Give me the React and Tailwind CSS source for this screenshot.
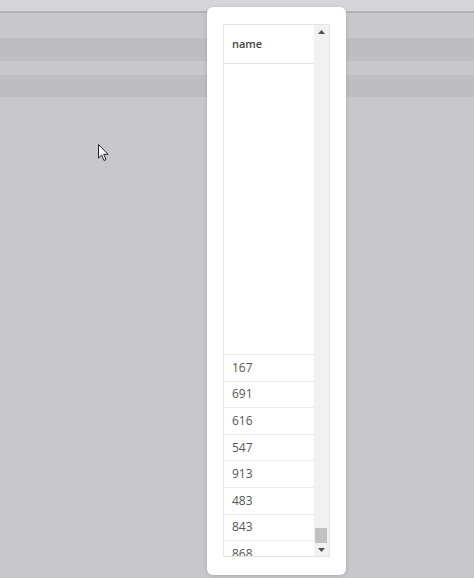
import React from "react";

const rows = ["167", "691", "616", "547", "913", "483", "843", "868"];

const App = () => {
  return (
    <div className="relative h-[578px] w-[474px] overflow-hidden bg-[#c8c7cc] font-['Open_Sans',sans-serif]">
      {/* page behind the overlay */}
      <div className="h-[11px] bg-[#d5d4d9]" />
      <div className="h-[2px] bg-[#b2b1b6]" />
      <div className="h-[25px] bg-[#c8c7cc]" />
      <div className="h-[23px] bg-[#bebdc2]" />
      <div className="h-[14px] bg-[#c8c7cc]" />
      <div className="h-[22px] bg-[#bebdc2]" />

      {/* mouse cursor */}
      <svg
        className="absolute left-[98px] top-[144px]"
        width="12"
        height="18"
        viewBox="0 0 12 18"
      >
        <path
          d="M0.5 0.5 L0.5 14 L3.6 11 L6 16.5 L8 15.6 L5.7 10.3 L10 10.3 Z"
          fill="#fff"
          stroke="#222"
          strokeWidth="1"
          strokeLinejoin="round"
        />
      </svg>

      {/* modal */}
      <div className="absolute left-[207px] top-[7px] h-[568px] w-[139px] rounded-md bg-white px-4 pt-[17px] shadow-[0_1px_4px_rgba(0,0,0,0.15)]">
        <div className="flex h-[533px] overflow-hidden border border-[#e4e4e4]">
          <div className="w-[91px] overflow-hidden">
            <div className="flex h-[39px] items-center border-b border-[#e4e4e4] pl-2 text-[11px] font-semibold text-[#444]">
              name
            </div>
            <div className="h-[290px]" />
            {rows.map((r) => (
              <div
                key={r}
                className="flex h-[26.6px] items-center border-t border-[#ececec] pl-2 text-[12px] text-[#555]"
              >
                {r}
              </div>
            ))}
          </div>
          <div className="relative w-[15px] bg-[#f1f1f1]">
            <svg className="absolute left-[4px] top-[5px]" width="7" height="4" viewBox="0 0 7 4">
              <path d="M0 4 L3.5 0 L7 4 Z" fill="#505050" />
            </svg>
            <div className="absolute left-[1px] top-[503px] h-[15px] w-[12px] bg-[#c1c1c1]" />
            <svg className="absolute left-[4px] top-[523px]" width="7" height="4" viewBox="0 0 7 4">
              <path d="M0 0 L7 0 L3.5 4 Z" fill="#505050" />
            </svg>
          </div>
        </div>
      </div>
    </div>
  );
};

export default App;
